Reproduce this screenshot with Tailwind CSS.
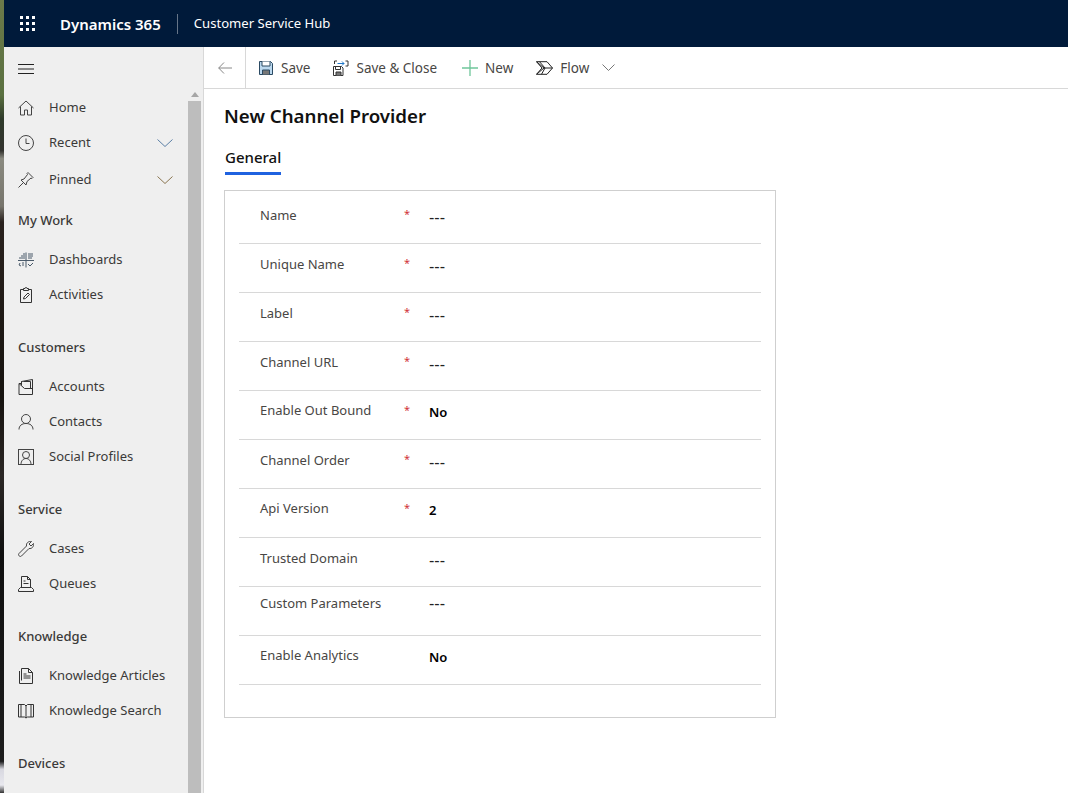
<!DOCTYPE html>
<html>
<head>
<meta charset="utf-8">
<script src="https://cdn.jsdelivr.net/npm/@tailwindcss/browser@4"></script>
</head>
<body class="flex h-[793px] w-[1068px] overflow-hidden bg-white font-['Noto_Sans',sans-serif] text-[13px]">
<div class="h-[793px] w-[4px] shrink-0 bg-[linear-gradient(#6b7a4a_0,#5a7040_12%,#2f3a2a_15%,#33332f_19%,#8a8a80_20%,#77756c_26%,#2a221e_28%,#16130f_50%,#2b2725_60%,#0f0f0f_70%,#1d1d1d_96%,#d8d8e0_97%,#e8e8ee_99%,#333_100%)]"></div>
<div class="w-[1064px] shrink-0">
<header class="flex h-[47px] items-center bg-[#001a3a] text-white">
  <svg class="ml-[16px] h-4 w-4" viewBox="0 0 16 16" fill="#fff"><rect x="0" y="0" width="3" height="3"/><rect x="6" y="0" width="3" height="3"/><rect x="12" y="0" width="3" height="3"/><rect x="0" y="6" width="3" height="3"/><rect x="6" y="6" width="3" height="3"/><rect x="12" y="6" width="3" height="3"/><rect x="0" y="12" width="3" height="3"/><rect x="6" y="12" width="3" height="3"/><rect x="12" y="12" width="3" height="3"/></svg>
  <span class="ml-[24px] pt-[1px] text-[15px] font-semibold">Dynamics 365</span>
  <span class="ml-[16px] h-[20px] w-px bg-white/40"></span>
  <span class="ml-[16px] pt-[1px] text-[13.1px]">Customer Service Hub</span>
</header>
<div class="flex h-[746px]">
  <nav class="relative flex w-[200px] shrink-0 overflow-hidden border-r border-[#d8d8d8] bg-[#efefef] text-[#3b3a39]">
    <div class="w-[184px] shrink-0">
      <div class="flex h-[43px] items-center pl-[14px]"><svg class="h-3 w-4" viewBox="0 0 16 12" stroke="#222" fill="none"><path d="M0 1.500h16M0 6h16M0 10.500h16"/></svg></div>
      <a class="flex h-[35px] items-center"><svg class="ml-[14px] h-4 w-4" viewBox="0 0 16 16" fill="none" stroke="#444"><path d="M.5 8 8 1l7.500 7M2.500 6.500V15h4v-5h3v5h4V6.500"/></svg><span class="ml-[15px]">Home</span></a>
      <a class="flex h-[35px] items-center"><svg class="ml-[14px] h-4 w-4" viewBox="0 0 16 16" fill="none" stroke="#444"><circle cx="8" cy="8" r="7.500"/><path d="M8 3.500V8.500H11.500"/></svg><span class="ml-[15px] grow">Recent</span><svg class="mr-[15px] h-2 w-4" viewBox="0 0 16 8" fill="none" stroke="#5b7fa6"><path d="M.5.500 8 7.500 15.500.500"/></svg></a>
      <a class="flex h-[39px] items-center"><svg class="ml-[14px] h-4 w-4" viewBox="0 0 16 16" fill="none" stroke="#444"><path d="M.5 15.500 5.500 10.500M3 8l5 5 1-3.500L13 6l1 .5 1-1L10 .500l-1 1 .5 1L6 7z"/></svg><span class="ml-[15px] grow">Pinned</span><svg class="mr-[15px] h-2 w-4" viewBox="0 0 16 8" fill="none" stroke="#8a7550"><path d="M.5.500 8 7.500 15.500.500"/></svg></a>
      <h3 class="mb-[4px] mt-[4px] flex h-[35px] items-center pl-[14px] font-medium">My Work</h3>
      <a class="flex h-[35px] items-center"><svg class="ml-[14px] h-4 w-4" viewBox="0 0 16 16" fill="none" stroke="#4a5a6a"><path d="M0 8.500h16M8 .5v15M2 7V5M4 7V3M6 7V1M10 2h5M10 4h5M10 6h4M2 11 1 13l2 1M5 10v4M10 12l2 2 3-3"/></svg><span class="ml-[15px]">Dashboards</span></a>
      <a class="flex h-[35px] items-center"><svg class="ml-[14px] h-4 w-4" viewBox="0 0 16 16" fill="none" stroke="#333"><path d="M5 2.500H2.500v13h11v-13H11M5.500 3.500V1.500h1.500a1 1 0 0 1 2 0h1.500v2zM5.500 12l.5-2 4-4 1.500 1.500-4 4z"/></svg><span class="ml-[15px]">Activities</span></a>
      <h3 class="mb-[4px] mt-[18px] flex h-[35px] items-center pl-[14px] font-medium">Customers</h3>
      <a class="flex h-[35px] items-center"><svg class="ml-[14px] h-4 w-4" viewBox="0 0 16 16" fill="none" stroke="#333"><path d="M1 15.500V4.500h2.500V2.500L14.500.5v15zM1 4.500l5.500 5h8M3.500 2.500v4M5.500 2.500h7v7"/></svg><span class="ml-[15px]">Accounts</span></a>
      <a class="flex h-[35px] items-center"><svg class="ml-[14px] h-4 w-4" viewBox="0 0 16 16" fill="none" stroke="#444"><circle cx="8" cy="5" r="4.500"/><path d="M1 15.500c0-4 3-6 7-6s7 2 7 6"/></svg><span class="ml-[15px]">Contacts</span></a>
      <a class="flex h-[35px] items-center"><svg class="ml-[14px] h-4 w-4" viewBox="0 0 16 16" fill="none" stroke="#444"><rect x=".5" y=".5" width="15" height="15"/><circle cx="8" cy="6" r="3.500"/><path d="M3 15.500c0-3.500 2-6 5-6s5 2.500 5 6"/></svg><span class="ml-[15px]">Social Profiles</span></a>
      <h3 class="mb-[4px] mt-[18px] flex h-[35px] items-center pl-[14px] font-medium">Service</h3>
      <a class="flex h-[35px] items-center"><svg class="ml-[14px] h-4 w-4" viewBox="0 0 16 16" fill="none" stroke="#444"><path d="M1 12.500 8.500 5c-.5-3 2-5 5-4.500L11 3l2 2 2.500-2.500C16 5.500 14 8 11 7.500L3.500 15c-1.500 1.500-4-1-2.500-2.500z"/></svg><span class="ml-[15px]">Cases</span></a>
      <a class="flex h-[35px] items-center"><svg class="ml-[14px] h-4 w-4" viewBox="0 0 16 16" fill="none" stroke="#333"><path d="M3.500 11.500V.5h6l3 3v8M9.500.5v3h3M.5 15.500v-2l2-2h11l2 2v2zM5.500 5h2M5.500 7.500h5"/></svg><span class="ml-[15px]">Queues</span></a>
      <h3 class="mb-[4px] mt-[18px] flex h-[35px] items-center pl-[14px] font-medium">Knowledge</h3>
      <a class="flex h-[35px] items-center"><svg class="ml-[14px] h-4 w-4" viewBox="0 0 16 16" fill="none" stroke="#333"><path d="M3.500 12.500V.5h7l4 4v11H3.500M10.500.5v4h4M1.500 3v12.500h10M5.500 6h3M5.500 8h7M5.500 10h7"/></svg><span class="ml-[15px]">Knowledge Articles</span></a>
      <a class="flex h-[35px] items-center"><svg class="ml-[14px] h-4 w-4" viewBox="0 0 16 16" fill="none" stroke="#333"><path d="M.5 1.500h6L8 3l1.500-1.500h6V14H9.500L8 15l-1.500-1H.5zM8 3v12M3 1.500V14M13 1.500V14"/></svg><span class="ml-[15px]">Knowledge Search</span></a>
      <h3 class="mt-[18px] flex h-[35px] items-center pl-[14px] font-medium">Devices</h3>
    </div>
    <div class="w-[13px] shrink-0 pt-[45px]">
      <div class="mx-auto h-0 w-0 border-x-[4px] border-b-[5px] border-x-transparent border-b-[#a6a6a6]"></div>
      <div class="mt-[4px] h-[700px] bg-[#bdbdbd]"></div>
    </div>
  </nav>
  <main class="min-w-0 grow">
    <div class="flex h-[42px] items-center border-b border-[#d8d8d8] text-[13.5px] text-[#484644]">
      <div class="flex h-[41px] w-[42px] items-center justify-center border-r border-[#d8d8d8]"><svg class="h-3 w-[14px]" viewBox="0 0 14 12" fill="none" stroke="#888"><path d="M6 .5.700 6 6 11.500M.700 6H14"/></svg></div>
      <svg class="ml-[13px] h-[14px] w-[14px]" viewBox="0 0 14 14" fill="none" stroke="#2b4a63"><path d="M.5.500h11l2 2v11H.5z" fill="#bcd9ef"/><path d="M3 .5V5h8V.5" fill="#fff"/><path d="M3.500 13.500V9h7v4.500" fill="#777"/></svg>
      <span class="ml-[8px] pt-[1px]">Save</span>
      <svg class="ml-[23px] h-[16px] w-[16px]" viewBox="0 0 16 16" fill="none" stroke="#333"><path d="M.5 6.500h8l1.500 1.500v7.500H.5zM2.500 6.500v3h5v-3" /><path d="M3 15.500V12h5v3.500" fill="#777"/><path d="M12.500 1H15v5h-2.500M1.500 4V1H4"/><path d="M4.500 3.500h6.500M9 1.500l2 2-2 2" stroke="#1f77c9"/></svg>
      <span class="ml-[7px] pt-[1px]">Save &amp; Close</span>
      <svg class="ml-[25px] h-4 w-4" viewBox="0 0 16 16" fill="none" stroke="#6fc69a" stroke-width="1.300"><path d="M8 0v16M0 8h16"/></svg>
      <span class="ml-[7px] pt-[1px]">New</span>
      <svg class="ml-[23px] h-[14px] w-[17px]" viewBox="0 0 17 14" fill="none" stroke="#222"><path d="M.5.700h10.500l5.500 6.300-5.500 6.300H.5l5.500-6.300zM.5.700 8 7h8.500M.5 13.300 8 7M3.500.7 9 7l-3.500 6.300"/></svg>
      <span class="ml-[7px] pt-[1px]">Flow</span>
      <svg class="ml-[13px] h-[7px] w-[13px]" viewBox="0 0 13 7" fill="none" stroke="#777"><path d="M.5.500 6.500 6.500 12.500.500"/></svg>
    </div>
    <div class="pl-[20px]">
      <h1 class="mt-[14px] text-[18.7px] font-semibold leading-[26px] text-[#111]">New Channel Provider</h1>
      <div class="ml-[1px] mt-[18px] inline-block border-b-[3px] border-[#1f62e0] pb-[5px] text-[15px] font-medium leading-[20px] text-[#111]">General</div>
      <section class="mt-[15px] h-[528px] w-[552px] border border-[#cfcfcf] px-[14px]">
        <div class="flex h-[53px] border-b border-[#d8d8d8]"><span class="ml-[21px] mt-[15px] w-[144px] text-[#484644]">Name</span><span class="mt-[15px] w-[25px] text-[11px] text-[#d13438]">*</span><span class="mt-[15px] font-['Liberation_Sans',sans-serif] text-[16px] text-[#222]">---</span></div>
        <div class="flex h-[49px] border-b border-[#d8d8d8]"><span class="ml-[21px] mt-[11px] w-[144px] text-[#484644]">Unique Name</span><span class="mt-[11px] w-[25px] text-[11px] text-[#d13438]">*</span><span class="mt-[11px] font-['Liberation_Sans',sans-serif] text-[16px] text-[#222]">---</span></div>
        <div class="flex h-[49px] border-b border-[#d8d8d8]"><span class="ml-[21px] mt-[11px] w-[144px] text-[#484644]">Label</span><span class="mt-[11px] w-[25px] text-[11px] text-[#d13438]">*</span><span class="mt-[11px] font-['Liberation_Sans',sans-serif] text-[16px] text-[#222]">---</span></div>
        <div class="flex h-[49px] border-b border-[#d8d8d8]"><span class="ml-[21px] mt-[11px] w-[144px] text-[#484644]">Channel URL</span><span class="mt-[11px] w-[25px] text-[11px] text-[#d13438]">*</span><span class="mt-[11px] font-['Liberation_Sans',sans-serif] text-[16px] text-[#222]">---</span></div>
        <div class="flex h-[49px] border-b border-[#d8d8d8]"><span class="ml-[21px] mt-[10px] w-[144px] text-[#484644]">Enable Out Bound</span><span class="mt-[11px] w-[25px] text-[11px] text-[#d13438]">*</span><span class="mt-[12px] font-semibold text-black">No</span></div>
        <div class="flex h-[49px] border-b border-[#d8d8d8]"><span class="ml-[21px] mt-[11px] w-[144px] text-[#484644]">Channel Order</span><span class="mt-[11px] w-[25px] text-[11px] text-[#d13438]">*</span><span class="mt-[11px] font-['Liberation_Sans',sans-serif] text-[16px] text-[#222]">---</span></div>
        <div class="flex h-[49px] border-b border-[#d8d8d8]"><span class="ml-[21px] mt-[10px] w-[144px] text-[#484644]">Api Version</span><span class="mt-[11px] w-[25px] text-[11px] text-[#d13438]">*</span><span class="mt-[12px] font-semibold text-black">2</span></div>
        <div class="flex h-[49px] border-b border-[#d8d8d8]"><span class="ml-[21px] mt-[11px] w-[169px] text-[#484644]">Trusted Domain</span><span class="mt-[11px] font-['Liberation_Sans',sans-serif] text-[16px] text-[#222]">---</span></div>
        <div class="flex h-[49px] border-b border-[#d8d8d8]"><span class="ml-[21px] mt-[7px] w-[169px] text-[#484644]">Custom Parameters</span><span class="mt-[5px] font-['Liberation_Sans',sans-serif] text-[16px] text-[#222]">---</span></div>
        <div class="flex h-[49px] border-b border-[#d8d8d8]"><span class="ml-[21px] mt-[10px] w-[169px] text-[#484644]">Enable Analytics</span><span class="mt-[12px] font-semibold text-black">No</span></div>
      </section>
    </div>
  </main>
</div>
</div>
</body>
</html>
